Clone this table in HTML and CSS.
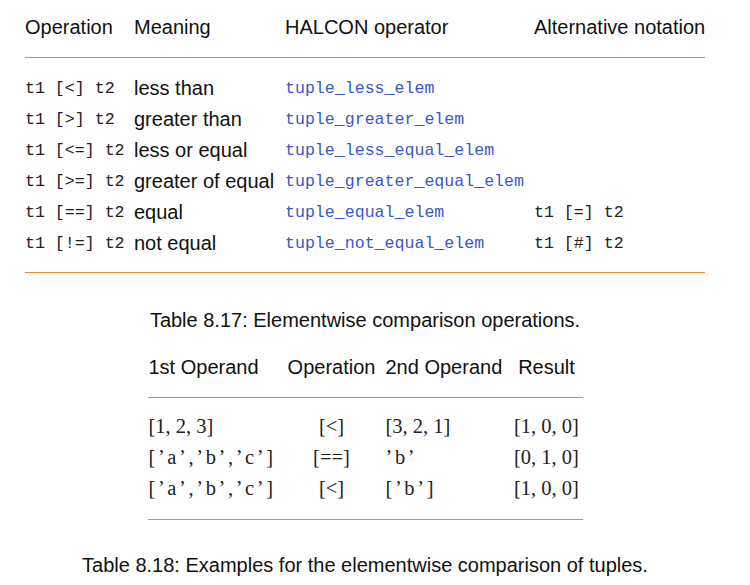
FILE: index.html
```html
<!DOCTYPE html>
<html>
<head>
<meta charset="utf-8">
<link rel="stylesheet" href="styles.css">
</head>
<body>
<div class="page">
  <div class="ops">
    <div class="ops-head">
      <span>Operation</span><span>Meaning</span><span>HALCON operator</span><span>Alternative notation</span>
    </div>
    <div class="ops-body">
      <span class="mono">t1 [&lt;] t2</span><span>less than</span><span class="mono op">tuple_less_elem</span><span></span>
      <span class="mono">t1 [&gt;] t2</span><span>greater than</span><span class="mono op">tuple_greater_elem</span><span></span>
      <span class="mono">t1 [&lt;=] t2</span><span>less or equal</span><span class="mono op">tuple_less_equal_elem</span><span></span>
      <span class="mono">t1 [&gt;=] t2</span><span>greater of equal</span><span class="mono op">tuple_greater_equal_elem</span><span></span>
      <span class="mono">t1 [==] t2</span><span>equal</span><span class="mono op">tuple_equal_elem</span><span class="mono">t1 [=] t2</span>
      <span class="mono">t1 [!=] t2</span><span>not equal</span><span class="mono op">tuple_not_equal_elem</span><span class="mono">t1 [#] t2</span>
    </div>
  </div>
  <p class="caption cap1">Table 8.17: Elementwise comparison operations.</p>

  <div class="ex">
    <div class="ex-head">
      <span>1st Operand</span><span class="c">Operation</span><span class="p">2nd Operand</span><span class="c">Result</span>
    </div>
    <div class="ex-body">
      <span>[1, 2, 3]</span><span class="c">[&lt;]</span><span class="p">[3, 2, 1]</span><span class="c">[1, 0, 0]</span>
      <span class="sp">[’a’,’b’,’c’]</span><span class="c">[==]</span><span class="p sp">’b’</span><span class="c">[0, 1, 0]</span>
      <span class="sp">[’a’,’b’,’c’]</span><span class="c">[&lt;]</span><span class="p sp">[’b’]</span><span class="c">[1, 0, 0]</span>
    </div>
  </div>
  <p class="caption cap2">Table 8.18: Examples for the elementwise comparison of tuples.</p>
</div>
</body>
</html>
```

FILE: styles.css
```css
html, body {
  margin: 0;
  padding: 0;
  background: #ffffff;
}
body {
  font-family: "Liberation Sans", Arial, sans-serif;
  font-size: 20px;
  color: #111;
}
.page {
  width: 680px;
  margin-left: 25px;
  display: flex;
  flex-direction: column;
  align-items: center;
}
.ops {
  width: 680px;
}
.ops-head, .ops-body {
  display: grid;
  grid-template-columns: 109px 151px 249px 171px;
  line-height: 31px;
  white-space: nowrap;
}
.ops-head {
  padding-top: 12px;
  padding-bottom: 14px;
  border-bottom: 1px solid #e98a2e;
}
.ops-body {
  padding-top: 15px;
  padding-bottom: 13px;
  border-bottom: 1px solid #e98a2e;
}
.mono {
  font-family: "Liberation Mono", "DejaVu Sans Mono", monospace;
  font-size: 16.6px;
  color: #222;
}
.op {
  color: #3a58c8;
}
.caption {
  margin: 0;
  line-height: 31px;
  white-space: nowrap;
}
.cap1 {
  margin-top: 32px;
}
.ex {
  margin-top: 16px;
  width: 435px;
}
.ex-head, .ex-body {
  display: grid;
  grid-template-columns: 133px 102px 128px 72px;
  line-height: 31px;
  white-space: nowrap;
}
.ex-head {
  padding-bottom: 14px;
  border-bottom: 1px solid #e98a2e;
}
.ex-head span:first-child, .ex-body span:nth-child(4n+1) {
  padding-left: 1px;
}
.ex-body {
  font-family: "Liberation Serif", "Times New Roman", serif;
  font-size: 20.5px;
  color: #222;
  padding-top: 13px;
  padding-bottom: 15px;
  border-bottom: 1px solid #e98a2e;
}
.c {
  text-align: center;
}
.p {
  padding-left: 3px;
}
.sp {
  letter-spacing: 2.6px;
}
.cap2 {
  margin-top: 30px;
}
```
